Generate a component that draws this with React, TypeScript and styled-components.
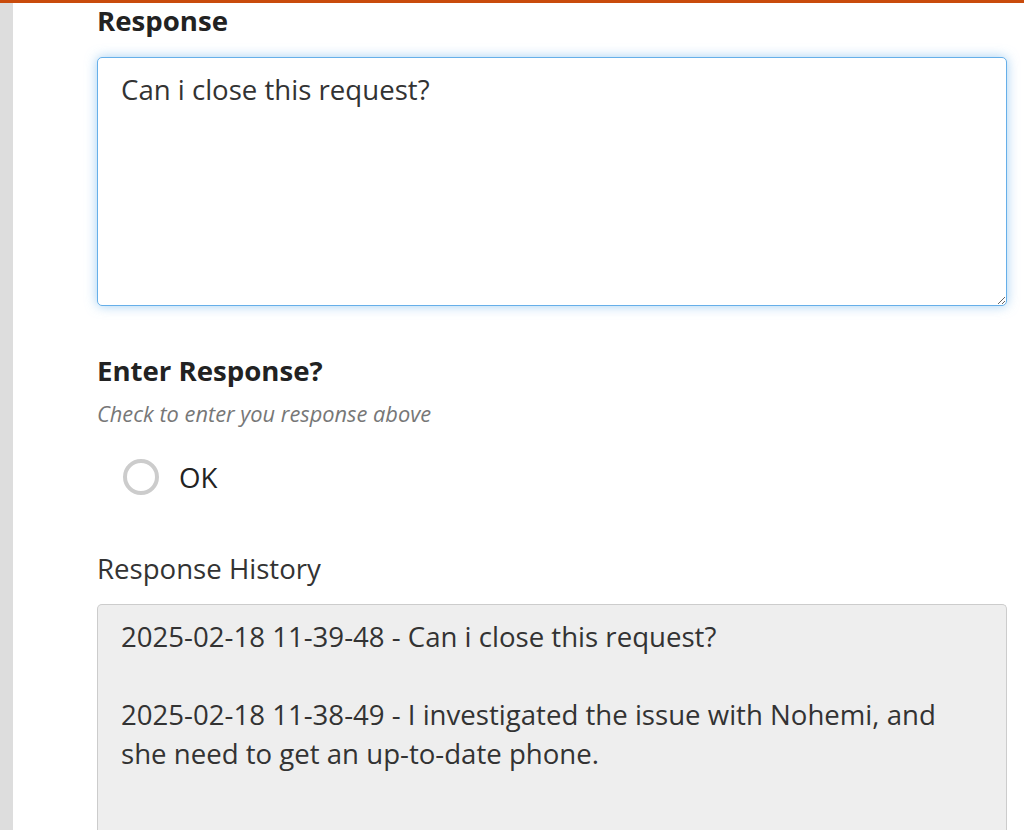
import React, {useState} from 'react';
import styled, {createGlobalStyle} from 'styled-components';

const GlobalStyle = createGlobalStyle`
  html, body {
    margin: 0;
    padding: 0;
    background: #fff;
    overflow: hidden;
  }
  body {
    font-family: 'Open Sans', 'Liberation Sans', sans-serif;
    color: #333;
  }
`;

const history = [
  '2025-02-18 11-39-48 - Can i close this request?',
  '',
  '2025-02-18 11-38-49 - I investigated the issue with Nohemi, and she need to get an up-to-date phone.',
];

export default function App() {
  const [response, setResponse] = useState('Can i close this request?');
  const [ok, setOk] = useState(false);
  return (
    <>
      <GlobalStyle />
      <Page>
        <SideBar />
        <Content>
          <Heading>Response</Heading>
          <ResponseBox value={response} onChange={(e) => setResponse(e.target.value)} />
          <Field>
            <Heading>Enter Response?</Heading>
            <Hint>Check to enter you response above</Hint>
            <RadioRow onClick={() => setOk(!ok)}>
              <Radio checked={ok} />
              <RadioLabel>OK</RadioLabel>
            </RadioRow>
          </Field>
          <HistoryLabel>Response History</HistoryLabel>
          <HistoryBox>
            {history.map((line, index) => (
              <HistoryLine key={index}>{line || '\u00a0'}</HistoryLine>
            ))}
          </HistoryBox>
        </Content>
      </Page>
    </>
  );
}

const Page = styled.div`
  display: flex;
  height: 830px;
  border-top: 3px solid #c94b0c;
  box-sizing: border-box;
`;

const SideBar = styled.div`
  width: 13px;
  flex-shrink: 0;
  background: #dddddd;
`;

const Content = styled.div`
  flex: 1;
  padding: 0 17px 0 84px;
  display: flex;
  flex-direction: column;
`;

const Heading = styled.div`
  font-size: 27.6px;
  font-weight: 700;
  color: #222;
  line-height: 34px;
`;

const ResponseBox = styled.textarea`
  margin-top: 20px;
  height: 249px;
  box-sizing: border-box;
  border: 1px solid #66afe9;
  border-radius: 5px;
  box-shadow: 0 0 12px rgba(102, 175, 233, 0.6);
  padding: 13px 23px;
  font-family: 'Open Sans', 'Liberation Sans', sans-serif;
  font-size: 27.6px;
  line-height: 36px;
  color: #333;
  outline: none;
  resize: vertical;
`;

const Field = styled.div`
  margin-top: 47px;
  display: flex;
  flex-direction: column;
`;

const Hint = styled.div`
  margin-top: 12px;
  font-size: 21.8px;
  line-height: 30px;
  font-style: italic;
  color: #777;
`;

const RadioRow = styled.div`
  display: flex;
  align-items: center;
  gap: 20px;
  margin-top: 30px;
  padding-left: 26px;
  cursor: pointer;
`;

const Radio = styled.span<{checked: boolean}>`
  width: 36px;
  height: 36px;
  box-sizing: border-box;
  border-radius: 50%;
  border: 4px solid #ccc;
  background: ${(p) => (p.checked ? '#337ab7' : '#fff')};
`;

const RadioLabel = styled.span`
  font-size: 27.6px;
  line-height: 36px;
  color: #222;
`;

const HistoryLabel = styled.div`
  margin-top: 54px;
  font-size: 27.6px;
  color: #333;
  line-height: 38px;
`;

const HistoryBox = styled.div`
  margin-top: 17px;
  flex: 1;
  background: #eee;
  border: 1px solid #ccc;
  border-bottom: none;
  border-radius: 5px 5px 0 0;
  padding: 12px 23px;
`;

const HistoryLine = styled.div`
  font-size: 27.6px;
  line-height: 39px;
  color: #333;
`;
